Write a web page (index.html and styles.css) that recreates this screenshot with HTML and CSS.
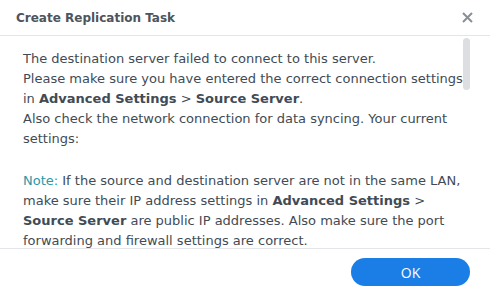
FILE: index.html
```html
<!DOCTYPE html>
<html lang="en">
<head>
  <meta charset="UTF-8" />
  <title>Create Replication Task</title>
  <link rel="stylesheet" href="styles.css">
</head>
<body>
  <div class="dialog">
    <div class="header">
      <span class="title">Create Replication Task</span>
      <span class="close">
        <svg width="11" height="11" viewBox="0 0 11 11"><path d="M1 1L10 10M10 1L1 10" stroke="#8a8f96" stroke-width="2"/></svg>
      </span>
    </div>
    <div class="body">
      <div class="content">
        <p>The destination server failed to connect to this server.<br>
        Please make sure you have entered the correct connection settings in <b>Advanced Settings</b> &gt; <b>Source Server</b>.<br>
        Also check the network connection for data syncing. Your current settings:</p>
        <p><span class="note">Note:</span> If the source and destination server are not in the same LAN, make sure their IP address settings in <b>Advanced Settings</b> &gt; <b>Source Server</b> are public IP addresses. Also make sure the port forwarding and firewall settings are correct.</p>
      </div>
      <div class="scrollbar"><div class="thumb"></div></div>
    </div>
    <div class="footer">
      <button class="ok">OK</button>
    </div>
  </div>
</body>
</html>
```

FILE: styles.css
```css
body {
    margin: 0;
    background: #ffffff;
    font-family: Verdana, 'DejaVu Sans', sans-serif;
    color: #414b55;
}
.dialog {
    width: 490px;
    height: 297px;
    display: flex;
    flex-direction: column;
}
.header {
    height: 36px;
    border-bottom: 1px solid #e3e5e8;
    display: flex;
    align-items: center;
    justify-content: space-between;
    padding: 0 17px 0 16px;
    box-sizing: border-box;
    flex-shrink: 0;
}
.title {
    font-size: 12px;
    font-weight: bold;
    color: #4e545c;
}
.close {
    display: flex;
}
.body {
    height: 212px;
    display: flex;
    overflow: hidden;
}
.content {
    padding: 13px 0 0 23px;
    width: 440px;
    font-size: 13px;
    line-height: 20px;
}
.content p {
    margin: 0 0 22px;
}
.note {
    color: #2b98a8;
}
.scrollbar {
    padding: 2px 0 0 0;
}
.thumb {
    width: 7px;
    height: 52px;
    background: #dcdee1;
    border-radius: 4px;
}
.footer {
    border-top: 1px solid #e3e5e8;
    flex: 1;
    display: flex;
    justify-content: flex-end;
    align-items: flex-start;
    padding: 9px 20px 0 0;
}
.ok {
    width: 119px;
    height: 28px;
    border: none;
    border-radius: 14px;
    background: #1a7ee6;
    color: #ffffff;
    font-family: 'Open Sans', sans-serif;
    font-size: 14px;
    padding: 0;
}
```
